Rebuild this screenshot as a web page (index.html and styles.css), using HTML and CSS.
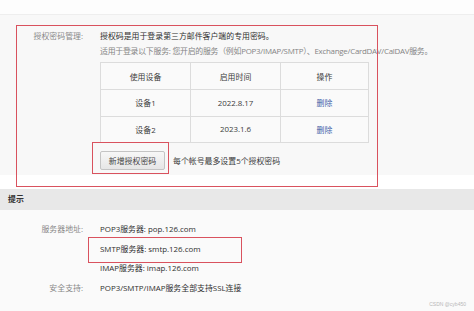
FILE: index.html
```html
<!DOCTYPE html>
<html lang="zh-CN">
<head>
<meta charset="utf-8">
<link rel="stylesheet" href="styles.css">
</head>
<body>
<div class="page">
  <div class="topbar"></div>
  <div class="panel">
    <div class="row">
      <div class="label">授权密码管理:</div>
      <div class="content">
        <div class="line main">授权码是用于登录第三方邮件客户端的专用密码。</div>
        <div class="line sub">适用于登录以下服务: 您开启的服务（例如POP3/IMAP/SMTP）、Exchange/CardDAV/CalDAV服务。</div>
        <table class="devices">
          <tr class="head"><td class="c1">使用设备</td><td class="c2">启用时间</td><td class="c3">操作</td></tr>
          <tr><td>设备1</td><td>2022.8.17</td><td><span class="link">删除</span></td></tr>
          <tr><td>设备2</td><td>2023.1.6</td><td><span class="link">删除</span></td></tr>
        </table>
        <div class="actions">
          <button class="btn">新增授权密码</button>
          <span class="note">每个帐号最多设置5个授权密码</span>
        </div>
      </div>
    </div>
  </div>
  <div class="gap"></div>
  <div class="tipbar">提示</div>
  <div class="info">
    <div class="irow"><div class="label">服务器地址:</div><div class="val">POP3服务器: pop.126.com</div></div>
    <div class="irow"><div class="label"></div><div class="val">SMTP服务器: smtp.126.com</div></div>
    <div class="irow"><div class="label"></div><div class="val">IMAP服务器: imap.126.com</div></div>
    <div class="irow"><div class="label">安全支持:</div><div class="val">POP3/SMTP/IMAP服务全部支持SSL连接</div></div>
  </div>
  <div class="mark mark-main"></div>
  <div class="mark mark-btn"></div>
  <div class="mark mark-smtp"></div>
  <div class="watermark">CSDN @cyb450</div>
</div>
</body>
</html>
```
FILE: styles.css
```css
html, body {
  margin: 0;
  padding: 0;
  background: #fbfbfb;
}
.page {
  position: relative;
  width: 474px;
  height: 311px;
  overflow: hidden;
  font-family: "Open Sans", "Noto Sans CJK SC", sans-serif;
  font-size: 7.9px;
  color: #333;
}
.topbar {
  height: 14px;
  background: #fdfdfd;
  border-bottom: 1px solid #eeeeee;
}
.panel {
  background: #f8f8f8;
  height: 160px;
  padding-top: 14px;
  box-sizing: border-box;
}
.row {
  display: grid;
  grid-template-columns: 83px 1fr;
  column-gap: 17px;
}
.label {
  text-align: right;
  color: #888;
  line-height: 15px;
  white-space: nowrap;
}
.content {
  display: flex;
  flex-direction: column;
}
.line {
  line-height: 15px;
  white-space: nowrap;
}
.main { color: #2f2f2f; }
.sub { color: #858585; letter-spacing: -0.25px; }
.devices {
  margin-top: 3px;
  width: 269px;
  border-collapse: collapse;
  background: #fafafa;
}
.devices td {
  border: 1px solid #dcdcdc;
  text-align: center;
  height: 25.5px;
  padding: 0;
  color: #3a3a3a;
}
.devices .head td { height: 26px; }
.devices .c1 { width: 89px; }
.devices .c2 { width: 89px; }
.link { color: #3d5fa8; }
.actions {
  display: flex;
  align-items: center;
  gap: 8px;
  margin-top: 8px;
}
.btn {
  width: 65px;
  height: 19px;
  padding: 0;
  font: inherit;
  color: #444;
  border: 1px solid #c4c4c4;
  border-radius: 2px;
  background: linear-gradient(#f7f7f7, #e6e6e6);
}
.note { color: #3a3a3a; }
.gap { height: 14px; background: #ffffff; }
.tipbar {
  height: 21px;
  line-height: 21px;
  background: #e8e8e8;
  padding-left: 8px;
  font-weight: bold;
  color: #333;
}
.info {
  padding-top: 10px;
  background: #fafafa;
  height: 101px;
  box-sizing: border-box;
}
.irow {
  display: grid;
  grid-template-columns: 83px 1fr;
  column-gap: 17px;
  line-height: 19.7px;
}
.irow .label { line-height: 19.7px; }
.val { color: #2f2f2f; white-space: nowrap; }
.mark {
  position: absolute;
  border: 1.5px solid #d9525e;
  box-sizing: border-box;
}
.mark-main { left: 16px; top: 25px; width: 362px; height: 162px; }
.mark-btn { left: 92px; top: 142px; width: 77px; height: 32px; }
.mark-smtp { left: 88px; top: 237px; width: 154px; height: 26px; }
.watermark {
  position: absolute;
  right: 8px;
  bottom: 4px;
  font-size: 5px;
  color: #b8b8b8;
  font-family: "Liberation Sans", sans-serif;
}
```
